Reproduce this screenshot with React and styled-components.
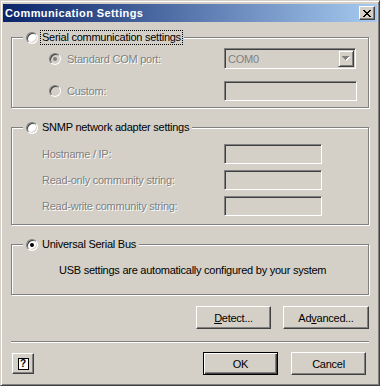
import React from 'react';
import styled, { createGlobalStyle } from 'styled-components';

const GlobalStyle = createGlobalStyle`
  html, body {
    margin: 0;
    padding: 0;
    background: #d4d0c8;
  }
  body {
    font-family: "Liberation Sans", Arial, sans-serif;
    font-size: 11px;
    letter-spacing: -0.25px;
    color: #000;
  }
`;

const Window = styled.div`
  box-sizing: border-box;
  width: 380px;
  height: 386px;
  background: #d4d0c8;
  border: 1px solid;
  border-color: #d4d0c8 #404040 #404040 #d4d0c8;
  box-shadow: inset 1px 1px 0 #fff, inset -1px -1px 0 #808080;
  padding: 2px;
  display: flex;
  flex-direction: column;
`;

const TitleBar = styled.div`
  height: 18px;
  margin-top: 1px;
  display: flex;
  align-items: center;
  padding: 0 2px;
  background: linear-gradient(to right, #0a246a, #a6caf0);
  color: #fff;
  font-weight: bold;
  font-size: 11px;
  letter-spacing: 0.4px;
`;

const TitleText = styled.span`
  flex: 1;
`;

const CloseBox = styled.span`
  box-sizing: border-box;
  width: 16px;
  height: 14px;
  display: flex;
  align-items: center;
  justify-content: center;
  background: #d4d0c8;
  border: 1px solid;
  border-color: #fff #404040 #404040 #fff;
  box-shadow: inset -1px -1px 0 #808080;
`;

const Client = styled.div`
  flex: 1;
  display: flex;
  flex-direction: column;
  padding: 15px 8px 0 8px;
`;

const Group = styled.div`
  position: relative;
  border: 1px solid #808080;
  box-shadow: inset 1px 1px 0 #fff, 1px 1px 0 #fff;
  margin-top: ${p => p.$mt || 0}px;
  padding: ${p => p.$pad};
  display: flex;
  flex-direction: column;
  gap: ${p => p.$gap || 0}px;
`;

const Legend = styled.div`
  position: absolute;
  top: -7px;
  left: 11px;
  height: 13px;
  padding: 0 2px 0 3px;
  display: flex;
  align-items: center;
  gap: 3px;
  background: #d4d0c8;
`;

const LegendText = styled.span`
  padding: 0 1px;
  line-height: 13px;
  outline: ${p => (p.$focus ? '1px dotted #000' : 'none')};
`;

const Radio = styled.span`
  box-sizing: border-box;
  width: 12px;
  height: 12px;
  flex-shrink: 0;
  border-radius: 50%;
  border: 1px solid;
  border-color: #808080 #fff #fff #808080;
  background: ${p => (p.$disabled ? '#d4d0c8' : '#fff')};
  box-shadow: inset 1px 1px 0 #404040, inset -1px -1px 0 #d4d0c8;
  display: flex;
  align-items: center;
  justify-content: center;

  &::after {
    content: '';
    display: ${p => (p.$checked ? 'block' : 'none')};
    width: 4px;
    height: 4px;
    border-radius: 50%;
    background: ${p => (p.$disabled ? '#808080' : '#000')};
  }
`;

const Row = styled.div`
  display: flex;
  align-items: center;
  height: ${p => p.$h}px;
`;

const RowLabel = styled.div`
  width: ${p => p.$w}px;
  display: flex;
  align-items: center;
  gap: 6px;
  color: #808080;
  text-shadow: 1px 1px 0 #fff;
`;

const Sunken = styled.div`
  box-sizing: border-box;
  width: ${p => p.$w}px;
  height: ${p => p.$h}px;
  padding: 1px;
  display: flex;
  align-items: center;
  background: #d4d0c8;
  border: 1px solid;
  border-color: #808080 #fff #fff #808080;
  box-shadow: inset 1px 1px 0 #404040, inset -1px -1px 0 #d4d0c8;
`;

const ComboText = styled.span`
  flex: 1;
  padding-left: 2px;
  color: #808080;
`;

const DropButton = styled.span`
  box-sizing: border-box;
  width: 16px;
  height: 17px;
  display: flex;
  align-items: center;
  justify-content: center;
  border: 1px solid;
  border-color: #d4d0c8 #404040 #404040 #d4d0c8;
  box-shadow: inset 1px 1px 0 #fff, inset -1px -1px 0 #808080;
`;

const Note = styled.div`
  line-height: 13px;
`;

const ButtonRow = styled.div`
  display: flex;
  align-items: center;
  justify-content: ${p => p.$justify || 'flex-end'};
  gap: ${p => p.$gap || 0}px;
  margin-top: ${p => p.$mt}px;
`;

const Button = styled.button`
  box-sizing: border-box;
  width: ${p => p.$w}px;
  height: 23px;
  padding: 0;
  margin: ${p => p.$margin || 0};
  background: #d4d0c8;
  font-family: "Liberation Sans", Arial, sans-serif;
  font-size: 11px;
  letter-spacing: -0.25px;
  color: #000;
  border: 1px solid;
  border-color: ${p => (p.$default ? '#000' : '#fff #404040 #404040 #fff')};
  box-shadow: ${p =>
    p.$default
      ? 'inset 1px 1px 0 #fff, inset -1px -1px 0 #404040, inset -2px -2px 0 #808080'
      : 'inset -1px -1px 0 #808080'};
`;

const HelpButton = styled(Button)`
  width: 22px;
  height: 21px;
  margin-left: 1px;
  display: flex;
  align-items: center;
  justify-content: center;
`;

const HelpGlyph = styled.span`
  box-sizing: border-box;
  width: 11px;
  height: 12px;
  border: 1px solid #000;
  background: #fff;
  font-weight: bold;
  font-size: 10px;
  line-height: 10px;
  letter-spacing: 0;
  text-align: center;
`;

const Spacer = styled.div`
  flex: 1;
`;

const Separator = styled.div`
  margin-top: 12px;
  border-top: 1px solid #808080;
  border-bottom: 1px solid #fff;
`;

const Key = styled.span`
  text-decoration: underline;
`;

const CLOSE = [
  'XX....XX',
  '.XX..XX.',
  '..XXXX..',
  '...XX...',
  '..XXXX..',
  '.XX..XX.',
  'XX....XX',
];

function CloseGlyph() {
  let d = '';
  CLOSE.forEach((line, y) => {
    [...line].forEach((c, x) => {
      if (c === 'X') d += `M${x} ${y}h1v1h-1z`;
    });
  });
  return (
    <svg width="8" height="7" viewBox="0 0 8 7" shapeRendering="crispEdges">
      <path d={d} fill="#000" />
    </svg>
  );
}

function DisabledArrow() {
  return (
    <svg width="8" height="5" viewBox="0 0 8 5" shapeRendering="crispEdges">
      <path d="M1 1h7v1h-1v1h-1v1h-1v1h-1v-1h-1v-1h-1v-1h-1z" fill="#fff" />
      <path d="M0 0h7v1h-1v1h-1v1h-1v1h-1v-1h-1v-1h-1v-1h-1z" fill="#808080" />
    </svg>
  );
}

export default function App() {
  return (
    <>
      <GlobalStyle />
      <Window>
        <TitleBar>
          <TitleText>Communication Settings</TitleText>
          <CloseBox>
            <CloseGlyph />
          </CloseBox>
        </TitleBar>

        <Client>
          <Group $pad="10px 0 6px 37px" $gap={12}>
            <Legend>
              <Radio />
              <LegendText $focus>Serial communication settings</LegendText>
            </Legend>
            <Row $h={21}>
              <RowLabel $w={175}>
                <Radio $checked $disabled />
                Standard COM port:
              </RowLabel>
              <Sunken $w={132} $h={21}>
                <ComboText>COM0</ComboText>
                <DropButton>
                  <DisabledArrow />
                </DropButton>
              </Sunken>
            </Row>
            <Row $h={20}>
              <RowLabel $w={175}>
                <Radio $disabled />
                Custom:
              </RowLabel>
              <Sunken $w={133} $h={20} />
            </Row>
          </Group>

          <Group $mt={19} $pad="16px 0 8px 30px" $gap={6}>
            <Legend>
              <Radio />
              <LegendText>SNMP network adapter settings</LegendText>
            </Legend>
            <Row $h={20}>
              <RowLabel $w={182}>Hostname / IP:</RowLabel>
              <Sunken $w={98} $h={20} />
            </Row>
            <Row $h={20}>
              <RowLabel $w={182}>Read-only community string:</RowLabel>
              <Sunken $w={98} $h={20} />
            </Row>
            <Row $h={20}>
              <RowLabel $w={182}>Read-write community string:</RowLabel>
              <Sunken $w={98} $h={20} />
            </Row>
          </Group>

          <Group $mt={19} $pad="19px 0 17px 47px">
            <Legend>
              <Radio $checked />
              <LegendText>Universal Serial Bus</LegendText>
            </Legend>
            <Note>USB settings are automatically configured by your system</Note>
          </Group>

          <ButtonRow $mt={11} $gap={12}>
            <Button $w={75}>
              <Key>D</Key>etect...
            </Button>
            <Button $w={86}>
              Ad<Key>v</Key>anced...
            </Button>
          </ButtonRow>

          <Separator />

          <ButtonRow $mt={9} $justify="flex-start">
            <HelpButton>
              <HelpGlyph>?</HelpGlyph>
            </HelpButton>
            <Spacer />
            <Button $w={75} $default>
              OK
            </Button>
            <Button $w={75} $margin="0 3px 0 13px">
              Cancel
            </Button>
          </ButtonRow>
        </Client>
      </Window>
    </>
  );
}
